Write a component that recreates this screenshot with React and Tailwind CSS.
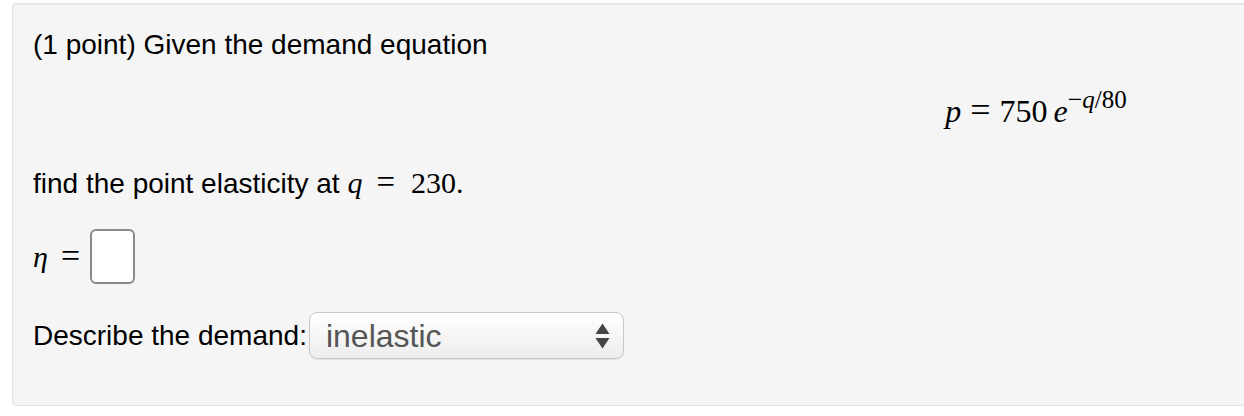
import React from "react";

const serif = { fontFamily: '"Liberation Serif", "Times New Roman", serif' };

export default function App() {
  return (
    <div className="w-[1244px] h-[416px] overflow-hidden bg-white">
      <div
        className="ml-[12px] mt-[3px] w-[2048px] h-[403px] border border-[#e3e3e3] rounded-[4px] bg-[#f5f5f5] shadow-[inset_0_1px_1px_rgba(0,0,0,0.05)] px-[20px] pt-[26px] text-black"
        style={{ fontFamily: '"Liberation Sans", Arial, Helvetica, sans-serif' }}
      >
        <div className="h-[30px] text-[28px] leading-[30px]">(1 point) Given the demand equation</div>

        <div className="mt-[30px] h-[40px] flex justify-center text-[32px] leading-[40px]" style={serif}>
          <span className="whitespace-nowrap inline-flex items-baseline leading-[40px]">
            <i>p</i>
            <span className="mx-[9px] text-[36px] leading-[40px]">=</span>
            <span>750</span>
            <i className="ml-[6px]">e</i>
            <span className="text-[25px] leading-[30px] relative top-[-14px] whitespace-nowrap">
              <span className="text-[26px]">−</span>
              <i>q</i>/80
            </span>
          </span>
        </div>

        <div className="mt-[37px] h-[30px] text-[28px] leading-[30px] flex items-baseline whitespace-nowrap">
          <span>find the point elasticity at&nbsp;</span>
          <span className="text-[30px] leading-[30px] inline-flex items-baseline" style={serif}>
            <i>q</i>
            <span className="ml-[14px] mr-[16px] text-[33px] leading-[30px]">=</span>
            <span>230.</span>
          </span>
        </div>

        <div className="mt-[32px] flex items-center h-[55px]">
          <span className="text-[30px] leading-[30px] inline-flex items-baseline" style={serif}>
            <i>η</i>
            <span className="ml-[13px] mr-[10px] text-[34px] leading-[30px]">=</span>
          </span>
          <div className="w-[45px] h-[55px] border-[2px] border-[#8a8a8a] rounded-[6px] bg-white" />
        </div>

        <div className="mt-[28px] flex items-center h-[47px] text-[28px]">
          <span className="mr-[2px]">Describe the demand:</span>
          <div className="relative flex items-center w-[315px] h-[47px] border border-[#c9c9c9] rounded-[8px] bg-gradient-to-b from-white to-[#ededed] shadow-[0_1px_1px_rgba(0,0,0,0.08)] pl-[16px]">
            <span className="text-[32px] text-[#555] leading-none">inelastic</span>
            <svg
              className="absolute right-[13px] top-1/2 -translate-y-1/2"
              width="15"
              height="27"
              viewBox="0 0 15 27"
            >
              <polygon points="7.5,1 14.5,11.5 0.5,11.5" fill="#444" />
              <polygon points="0.5,15.5 14.5,15.5 7.5,26" fill="#444" />
            </svg>
          </div>
        </div>
      </div>
    </div>
  );
}
